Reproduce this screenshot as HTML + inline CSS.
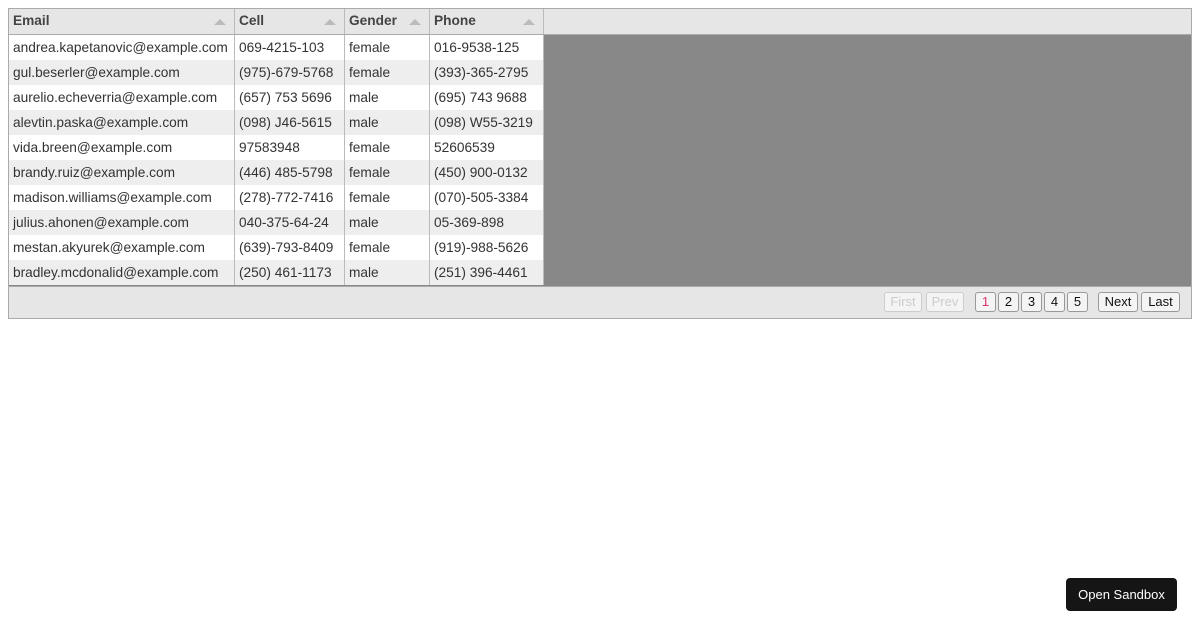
<!DOCTYPE html>
<html><head><style>
body{margin:0;width:1200px;height:630px;background:#fff;font-family:"Liberation Sans",sans-serif;font-size:13.7px;color:#333;position:relative;overflow:hidden}
.box{position:absolute;left:8px;top:8px;width:1182px;height:309px;border:1px solid #aaa;background:#888}
.hdr{position:absolute;left:0;top:0;width:1182px;height:25px;background:#e6e6e6;border-bottom:1px solid #aaa}
.c{position:absolute;box-sizing:border-box;padding-left:4px;white-space:nowrap;border-right:1px solid #bbb}
.h{font-weight:bold;color:#444;height:25px;line-height:24px}
.h i{position:absolute;right:8px;top:10px;width:0;height:0;border-left:6px solid transparent;border-right:6px solid transparent;border-bottom:6px solid #bbb}
.row{position:absolute;left:0;width:535px;height:25px;line-height:25px}
.row .c{height:25px}
.foot{position:absolute;left:0;top:277px;width:1182px;height:31px;background:#e6e6e6;border-top:1px solid #aaa}
.b{position:absolute;top:5px;height:20px;box-sizing:border-box;border:1px solid #999;border-radius:3px;background:#f4f4f4;font-size:13px;line-height:18px;text-align:center;color:#111}
.d{color:#ccc;border-color:#ccc}
.sb{position:absolute;left:1066px;top:578px;width:111px;height:33px;background:#151515;color:#fff;border-radius:4px;font-size:13px;line-height:33px;text-align:center}
</style></head><body>
<div class="box">
<div class="hdr">
<div class="c h" style="left:0;width:226px">Email<i></i></div>
<div class="c h" style="left:226px;width:110px">Cell<i></i></div>
<div class="c h" style="left:336px;width:85px">Gender<i></i></div>
<div class="c h" style="left:421px;width:114px">Phone<i></i></div>
</div>
<div class="row" style="top:26px;background:#fff"><div class="c" style="left:0;width:226px">andrea.kapetanovic@example.com</div><div class="c" style="left:226px;width:110px">069-4215-103</div><div class="c" style="left:336px;width:85px">female</div><div class="c" style="left:421px;width:114px">016-9538-125</div></div>
<div class="row" style="top:51px;background:#eee"><div class="c" style="left:0;width:226px">gul.beserler@example.com</div><div class="c" style="left:226px;width:110px">(975)-679-5768</div><div class="c" style="left:336px;width:85px">female</div><div class="c" style="left:421px;width:114px">(393)-365-2795</div></div>
<div class="row" style="top:76px;background:#fff"><div class="c" style="left:0;width:226px">aurelio.echeverria@example.com</div><div class="c" style="left:226px;width:110px">(657) 753 5696</div><div class="c" style="left:336px;width:85px">male</div><div class="c" style="left:421px;width:114px">(695) 743 9688</div></div>
<div class="row" style="top:101px;background:#eee"><div class="c" style="left:0;width:226px">alevtin.paska@example.com</div><div class="c" style="left:226px;width:110px">(098) J46-5615</div><div class="c" style="left:336px;width:85px">male</div><div class="c" style="left:421px;width:114px">(098) W55-3219</div></div>
<div class="row" style="top:126px;background:#fff"><div class="c" style="left:0;width:226px">vida.breen@example.com</div><div class="c" style="left:226px;width:110px">97583948</div><div class="c" style="left:336px;width:85px">female</div><div class="c" style="left:421px;width:114px">52606539</div></div>
<div class="row" style="top:151px;background:#eee"><div class="c" style="left:0;width:226px">brandy.ruiz@example.com</div><div class="c" style="left:226px;width:110px">(446) 485-5798</div><div class="c" style="left:336px;width:85px">female</div><div class="c" style="left:421px;width:114px">(450) 900-0132</div></div>
<div class="row" style="top:176px;background:#fff"><div class="c" style="left:0;width:226px">madison.williams@example.com</div><div class="c" style="left:226px;width:110px">(278)-772-7416</div><div class="c" style="left:336px;width:85px">female</div><div class="c" style="left:421px;width:114px">(070)-505-3384</div></div>
<div class="row" style="top:201px;background:#eee"><div class="c" style="left:0;width:226px">julius.ahonen@example.com</div><div class="c" style="left:226px;width:110px">040-375-64-24</div><div class="c" style="left:336px;width:85px">male</div><div class="c" style="left:421px;width:114px">05-369-898</div></div>
<div class="row" style="top:226px;background:#fff"><div class="c" style="left:0;width:226px">mestan.akyurek@example.com</div><div class="c" style="left:226px;width:110px">(639)-793-8409</div><div class="c" style="left:336px;width:85px">female</div><div class="c" style="left:421px;width:114px">(919)-988-5626</div></div>
<div class="row" style="top:251px;background:#eee"><div class="c" style="left:0;width:226px">bradley.mcdonalid@example.com</div><div class="c" style="left:226px;width:110px">(250) 461-1173</div><div class="c" style="left:336px;width:85px">male</div><div class="c" style="left:421px;width:114px">(251) 396-4461</div></div>
<div class="foot">
<div class="b d" style="left:875px;width:38px">First</div>
<div class="b d" style="left:917px;width:38px">Prev</div>
<div class="b" style="left:966px;width:21px;color:#e0306a">1</div>
<div class="b" style="left:989px;width:21px">2</div>
<div class="b" style="left:1012px;width:21px">3</div>
<div class="b" style="left:1035px;width:21px">4</div>
<div class="b" style="left:1058px;width:21px">5</div>
<div class="b" style="left:1089px;width:40px">Next</div>
<div class="b" style="left:1132px;width:39px">Last</div>
</div>
</div>
<div class="sb">Open Sandbox</div>
</body></html>
